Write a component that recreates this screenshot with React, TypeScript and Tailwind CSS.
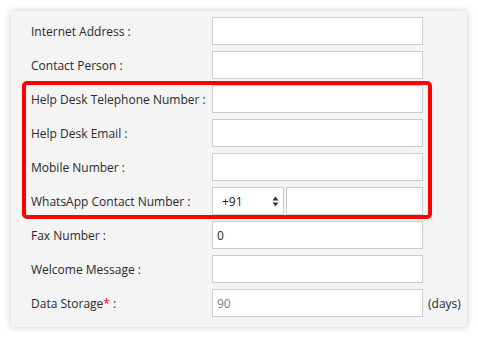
import React from "react";

const font = { fontFamily: '"Open Sans", "Noto Sans", sans-serif' };

function Row({
  label,
  children,
}: {
  label: React.ReactNode;
  children: React.ReactNode;
}) {
  return (
    <div className="flex items-center h-[28px]">
      <div className="w-[181px] pt-[2px] text-[12px] text-[#2a2a2a]">{label}</div>
      {children}
    </div>
  );
}

function Input({ value, muted }: { value?: string; muted?: boolean }) {
  return (
    <div
      className={`w-[211px] h-[28px] bg-white border border-[#ccc] flex items-center px-[4px] pt-[1px] text-[12px] ${
        muted ? "text-[#808080]" : "text-[#2a2a2a]"
      }`}
    >
      {value}
    </div>
  );
}

export default function App() {
  return (
    <div className="w-[478px] h-[338px] bg-white p-[11px]" style={font}>
      <div className="w-[456px] h-[316px] bg-[#f4f4f4] shadow-[0_0_7px_rgba(0,0,0,0.22)] pl-[20px] pt-[6px]">
        <div className="flex flex-col gap-[6px]">
          <Row label="Internet Address :">
            <Input />
          </Row>
          <Row label="Contact Person :">
            <Input />
          </Row>
          <div className="-my-[4px] -mx-[9px] w-[410px] px-[5px] border-4 border-[#ff0000] rounded-[5px] flex flex-col gap-[6px]">
            <Row label="Help Desk Telephone Number :">
              <Input />
            </Row>
            <Row label="Help Desk Email :">
              <Input />
            </Row>
            <Row label="Mobile Number :">
              <Input />
            </Row>
            <Row label="WhatsApp Contact Number :">
              <div className="flex gap-[2px]">
                <div className="w-[72px] h-[28px] bg-white border border-[#ccc] flex items-center justify-between pl-[9px] pr-[4px] pt-[1px] text-[12px] text-[#222]">
                  <span>+91</span>
                  <svg width="7" height="11" viewBox="0 0 7 11">
                    <path d="M3.5 0.5 L6.5 4.5 L0.5 4.5 Z" fill="#333" />
                    <path d="M3.5 10.5 L6.5 6.5 L0.5 6.5 Z" fill="#333" />
                  </svg>
                </div>
                <div className="w-[137px] h-[28px] bg-white border border-[#ccc]" />
              </div>
            </Row>
          </div>
          <Row label="Fax Number :">
            <Input value="0" />
          </Row>
          <Row label="Welcome Message :">
            <Input />
          </Row>
          <Row
            label={
              <>
                Data Storage<span className="text-[#ff0000]">*</span> :
              </>
            }
          >
            <Input value="90" muted />
            <span className="ml-[5px] pt-[2px] text-[12px] text-[#2a2a2a]">(days)</span>
          </Row>
        </div>
      </div>
    </div>
  );
}
